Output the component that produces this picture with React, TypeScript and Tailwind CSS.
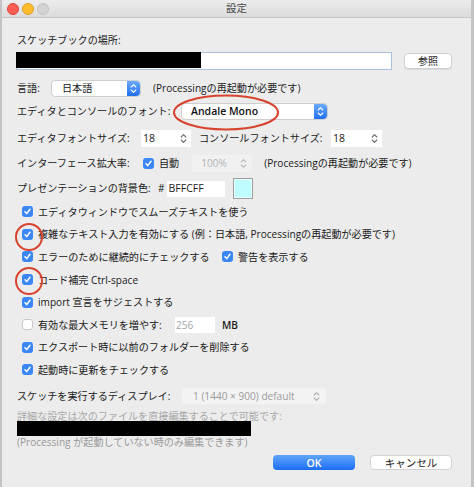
import React from "react";

const FONT = '"Open Sans", "Noto Sans CJK JP", sans-serif';

function CB({ checked = true }: { checked?: boolean }) {
  if (!checked)
    return <span className="w-[11px] h-[11px] rounded-[3px] bg-white border border-[#c9c9c9] shrink-0 block" />;
  return (
    <span className="w-[11px] h-[11px] rounded-[3px] bg-[#3b87f7] flex items-center justify-center shrink-0">
      <svg width="9" height="9" viewBox="0 0 9 9">
        <path d="M2 4.8 L3.7 6.6 L7 2.3" stroke="white" strokeWidth="1.5" fill="none" strokeLinecap="round" strokeLinejoin="round" />
      </svg>
    </span>
  );
}

function Spin({ color = "#6b6b6b" }: { color?: string }) {
  return (
    <svg width="7" height="11" viewBox="0 0 7 11" className="shrink-0">
      <path d="M1.2 4 L3.5 1.6 L5.8 4" stroke={color} strokeWidth="1.1" fill="none" strokeLinecap="round" strokeLinejoin="round" />
      <path d="M1.2 7 L3.5 9.4 L5.8 7" stroke={color} strokeWidth="1.1" fill="none" strokeLinecap="round" strokeLinejoin="round" />
    </svg>
  );
}

function BlueCap() {
  return (
    <span className="w-[13px] h-full rounded-r-[4px] bg-gradient-to-b from-[#6aa9fa] to-[#1f6ff2] flex items-center justify-center shrink-0">
      <Spin color="#ffffff" />
    </span>
  );
}

function CheckRow({ children, checked = true }: { children: React.ReactNode; checked?: boolean }) {
  return (
    <div className="h-[22.6px] flex items-center pl-[5px]">
      <CB checked={checked} />
      <span className="ml-[5px] whitespace-nowrap">{children}</span>
    </div>
  );
}

export default function App() {
  return (
    <div
      className="relative w-[474px] h-[487px] bg-[#ececec] overflow-hidden border-l-2 border-r-[3px] border-[#c4c4c4] text-[10.1px] text-[#1a1a1a] leading-none"
      style={{ fontFamily: FONT }}
    >
      {/* title bar */}
      <div className="h-[18px] bg-gradient-to-b from-[#ececec] to-[#dcdcdc] border-b border-[#c6c6c6] grid grid-cols-[1fr_auto_1fr] items-center">
        <div className="flex items-center gap-[3px] pl-[5px]">
          <span className="w-[12px] h-[12px] rounded-full bg-[#fb5d55] border border-[#e0443c]" />
          <span className="w-[12px] h-[12px] rounded-full bg-[#fcbc2e] border border-[#dfa023]" />
          <span className="w-[12px] h-[12px] rounded-full bg-[#d3d3d3] border border-[#c2c2c2]" />
        </div>
        <span className="text-[#4a4a4a] text-[10.5px]">設定</span>
        <div />
      </div>

      <div className="pl-[15px] pr-[19px] flex flex-col">
        {/* sketchbook */}
        <div className="mt-[13px] h-[18px] flex items-center">スケッチブックの場所:</div>
        <div className="mt-[3px] h-[18px] flex items-center">
          <div className="-ml-px w-[376px] h-[18px] bg-white border border-[#a9c1de] flex">
            <div className="w-[185px] h-full bg-black -my-px -ml-px" />
          </div>
          <button className="ml-[12px] w-[48px] h-[16px] bg-white rounded-[4px] border border-[#d0d0d0] shadow-[0_1px_0_rgba(0,0,0,0.08)] text-[10px] flex items-center justify-center">
            参照
          </button>
        </div>

        {/* language */}
        <div className="mt-[9px] h-[18px] flex items-center">
          <span className="w-[34px] shrink-0">言語:</span>
          <div className="w-[90px] h-[17px] bg-white rounded-[4px] border border-[#cfcfcf] flex items-center">
            <span className="flex-1 pl-[10px]">日本語</span>
            <BlueCap />
          </div>
          <span className="ml-[12px] whitespace-nowrap">(Processingの再起動が必要です)</span>
        </div>

        {/* font */}
        <div className="mt-[5px] h-[18px] flex items-center">
          <span className="w-[164px] shrink-0 whitespace-nowrap">エディタとコンソールのフォント:</span>
          <div className="w-[147px] h-[17px] bg-white rounded-[4px] border border-[#cfcfcf] flex items-center">
            <span className="flex-1 pl-[9px] font-semibold text-[#111] text-[10.5px]">Andale Mono</span>
            <BlueCap />
          </div>
        </div>

        {/* font sizes */}
        <div className="mt-[9px] h-[18px] flex items-center">
          <span className="w-[124px] shrink-0 whitespace-nowrap">エディタフォントサイズ:</span>
          <div className="w-[50px] h-[17px] bg-white flex items-center pl-[2px] pr-[4px]">
            <span className="flex-1 text-[10.5px]">18</span>
            <Spin />
          </div>
          <span className="ml-[8px] w-[132px] shrink-0 whitespace-nowrap">コンソールフォントサイズ:</span>
          <div className="w-[51px] h-[17px] bg-white flex items-center pl-[2px] pr-[4px]">
            <span className="flex-1 text-[10.5px]">18</span>
            <Spin />
          </div>
        </div>

        {/* interface */}
        <div className="mt-[7px] h-[18px] flex items-center">
          <span className="w-[126px] shrink-0 whitespace-nowrap">インターフェース拡大率:</span>
          <CB />
          <span className="ml-[5px]">自動</span>
          <div className="ml-[13px] w-[60px] h-[17px] bg-[#f1f1f1] flex items-center pl-[9px] pr-[5px] text-[#b3b3b3]">
            <span className="flex-1">100%</span>
            <Spin color="#b8b8b8" />
          </div>
          <span className="ml-[12px] whitespace-nowrap">(Processingの再起動が必要です)</span>
        </div>

        {/* presentation color */}
        <div className="mt-[6px] h-[21px] flex items-center">
          <span className="w-[141px] shrink-0 whitespace-nowrap">プレゼンテーションの背景色:</span>
          <span>#</span>
          <div className="ml-[2px] w-[58px] h-[16px] bg-white flex items-center pl-[2px] text-[10.5px]">BFFCFF</div>
          <div className="ml-[8px] w-[20px] h-[21px] bg-[#bffcff] border border-[#9e9e9e] shadow-[inset_0_0_0_1px_#e6ffff]" />
        </div>

        {/* checkboxes */}
        <div className="mt-[1.5px] flex flex-col">
          <CheckRow>エディタウィンドウでスムーズテキストを使う</CheckRow>
          <CheckRow>複雑なテキスト入力を有効にする (例：日本語, Processingの再起動が必要です)</CheckRow>
          <div className="h-[22.6px] flex items-center pl-[5px]">
            <CB />
            <span className="ml-[5px] w-[184px] whitespace-nowrap">エラーのために継続的にチェックする</span>
            <CB />
            <span className="ml-[5px] whitespace-nowrap">警告を表示する</span>
          </div>
          <CheckRow>コード補完 Ctrl-space</CheckRow>
          <CheckRow>import 宣言をサジェストする</CheckRow>
          <div className="h-[22.6px] flex items-center pl-[5px]">
            <CB checked={false} />
            <span className="ml-[5px] w-[137px] whitespace-nowrap">有効な最大メモリを増やす:</span>
            <div className="w-[40px] h-[16px] bg-white flex items-center pl-[1px] text-[#a3a3a3]">256</div>
            <span className="ml-[7px] font-semibold">MB</span>
          </div>
          <CheckRow>エクスポート時に以前のフォルダーを削除する</CheckRow>
          <CheckRow>起動時に更新をチェックする</CheckRow>
        </div>

        {/* display */}
        <div className="mt-[7px] h-[16px] flex items-center">
          <span className="w-[165px] shrink-0 whitespace-nowrap">スケッチを実行するディスプレイ:</span>
          <div className="w-[144px] h-[16px] bg-[#f3f3f3] rounded-[4px] flex items-center pl-[11px] pr-[6px] text-[#9c9c9c]">
            <span className="flex-1 whitespace-nowrap">1 (1440 × 900) default</span>
            <Spin color="#b0b0b0" />
          </div>
        </div>

        {/* details */}
        <div className="mt-[6px] h-[12px] flex items-center text-[#a8a8a8] whitespace-nowrap">
          詳細な設定は次のファイルを直接編集することで可能です:
        </div>
        <div className="-mt-[1px] w-[234px] h-[15px] bg-black" />
        <div className="h-[12px] flex items-center text-[#9a9a9a] whitespace-nowrap">
          (Processing が起動していない時のみ編集できます)
        </div>

        {/* buttons */}
        <div className="mt-[7px] flex justify-end gap-[15px]">
          <button className="w-[82px] h-[15px] rounded-[4px] bg-gradient-to-b from-[#5fa5fa] to-[#1b6cf2] text-white font-semibold text-[10.5px] flex items-center justify-center">
            OK
          </button>
          <button className="w-[82px] h-[15px] rounded-[4px] bg-white border border-[#d2d2d2] text-[10.5px] flex items-center justify-center">
            キャンセル
          </button>
        </div>
      </div>

      {/* red annotation marks */}
      <svg className="absolute left-0 top-0 pointer-events-none" width="474" height="487">
        <ellipse cx="224" cy="112.5" rx="52" ry="17" stroke="#d8432f" strokeWidth="2" fill="none" />
        <circle cx="27" cy="237" r="13" stroke="#d8432f" strokeWidth="2" fill="none" />
        <circle cx="27" cy="281" r="13" stroke="#d8432f" strokeWidth="2" fill="none" />
      </svg>
    </div>
  );
}
